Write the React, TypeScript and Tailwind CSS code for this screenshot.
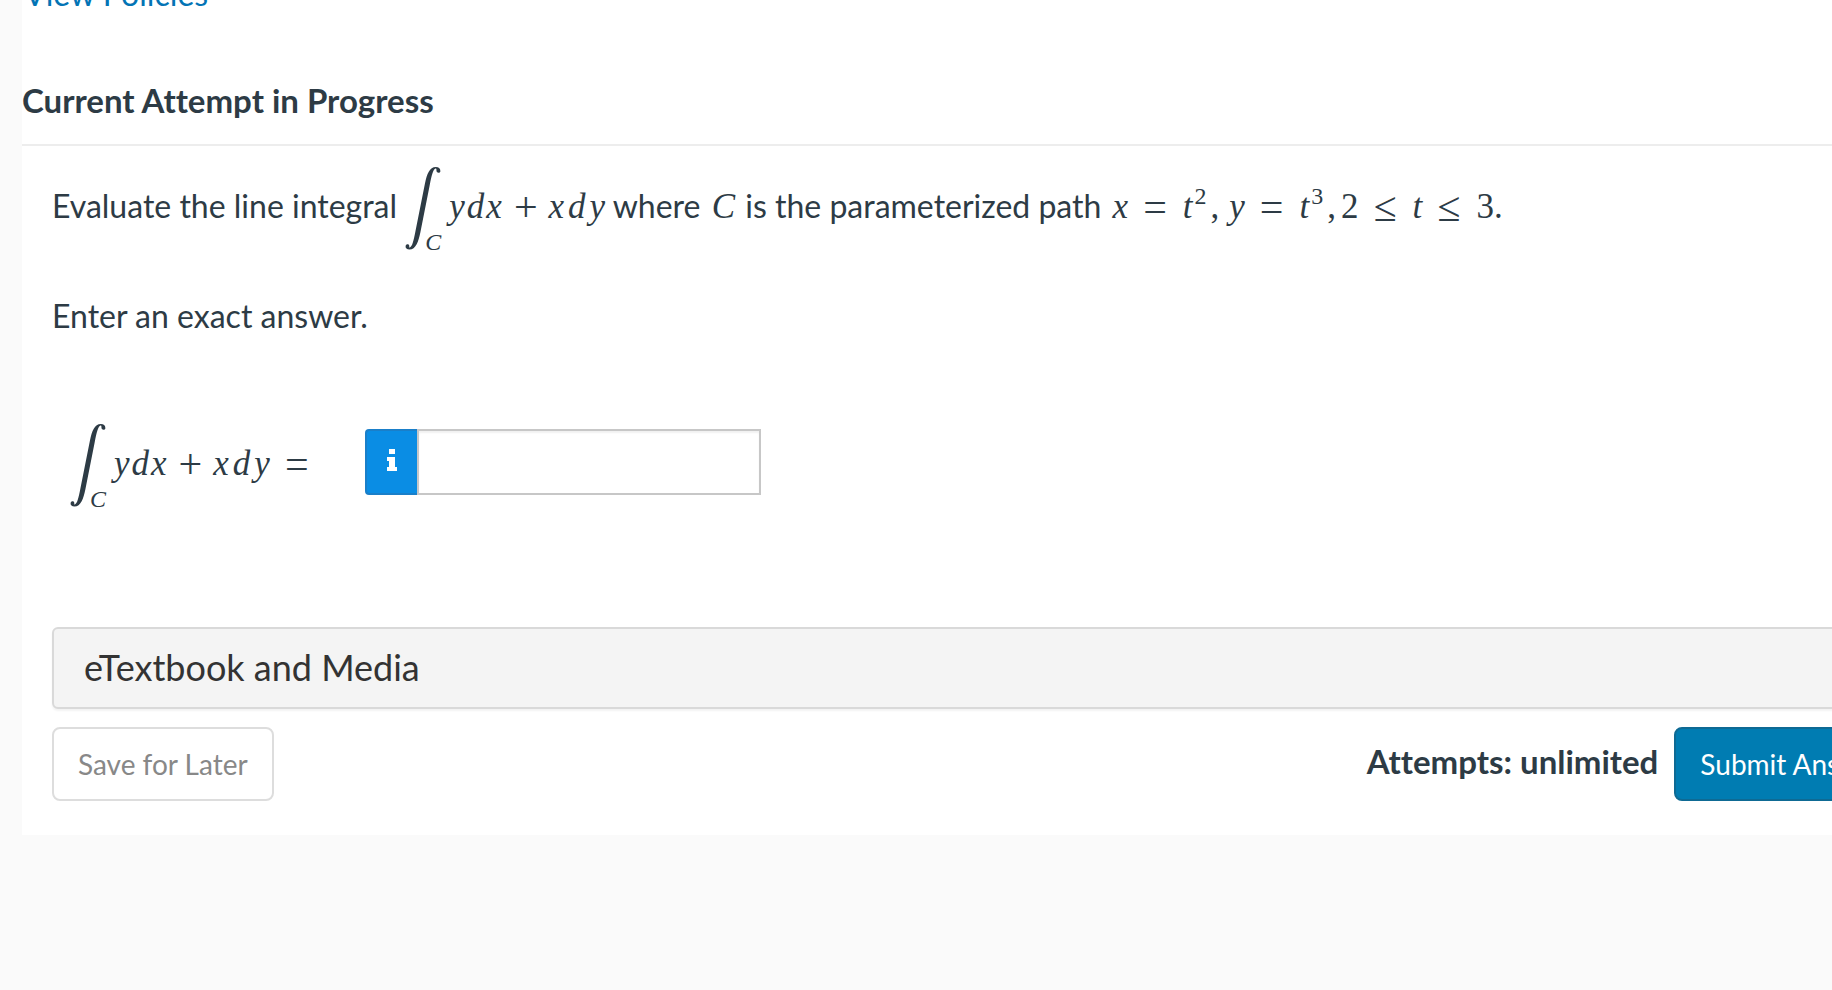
import { useState, type ReactNode } from 'react';

function Integral(): ReactNode {
  return (
    <>
      <svg
        aria-label="integral"
        viewBox="0 0 36 84"
        className="inline h-[84px] w-9 align-[-32px]"
        fill="currentColor"
      >
        <path d="M35.4 5.2C35.4 2.4 33.6 1 30.8 1C24.6 1 21.9 8.2 20 17.2L10.4 65.5C8.6 74.6 7.3 80.6 4.9 81.4C3.9 81.7 4.5 80.7 4.2 79.4C3.8 77.9 1 77.8 .6 79.9C.2 82 1.9 83.5 4.5 83.5C10.8 83.5 13.4 75.8 15.4 66.2L24.7 19.2C26.6 9.6 28.2 3.5 30.5 2.6C31.6 2.2 31.4 3.4 31.5 5C31.7 7.2 35 7.3 35.4 5.2Z" />
      </svg>
      <sub className="static -ml-4 mr-2 inline-block align-[-32px] text-2xl leading-none">C</sub>
    </>
  );
}

function MathText({ children }: { children: ReactNode }): ReactNode {
  return (
    <span className="inline-block whitespace-nowrap font-['Liberation_Serif',serif] text-[35px] italic leading-8">
      {children}
    </span>
  );
}

// relations (=, ≤) sit wider apart than the plus sign
function Relation({ children }: { children: ReactNode }): ReactNode {
  return (
    <span className="ml-[15px] mr-4 inline-block align-[-3px] text-[42px] not-italic leading-8">
      {children}
    </span>
  );
}

function Power({ children }: { children: ReactNode }): ReactNode {
  return (
    <sup className="static ml-[2px] inline-block align-[14px] text-2xl not-italic leading-none">
      {children}
    </sup>
  );
}

function Integrand(): ReactNode {
  return (
    <>
      <Integral />
      <span className="inline-flex gap-[2px]">
        <i>y</i>
        <i>d</i>
        <i>x</i>
      </span>
      <span className="ml-3 mr-[11px] inline-block align-[-3px] text-[42px] not-italic leading-8">+</span>
      <span className="inline-flex gap-1">
        <i>x</i>
        <i>d</i>
        <i>y</i>
      </span>
    </>
  );
}

export default function App(): ReactNode {
  const [answer, setAnswer] = useState('');

  return (
    <div className="min-h-screen overflow-hidden bg-[#fafafa] pl-[22px] font-['Lato',sans-serif] text-[32px] leading-8 text-[#2d3b45] [font-variant-ligatures:none]">
      <main className="-mr-[110px] bg-white pb-[34px]">
        <a href="#policies" className="-mt-[22px] ml-[2px] block w-fit text-[#0374b5]">
          View Policies
        </a>

        <h2 className="mt-[74px] border-b-2 border-[#ededed] pb-7 text-[33px] font-bold leading-8">
          Current Attempt in Progress
        </h2>

        <section className="px-[30px]">
          <p className="mt-5 whitespace-nowrap">
            Evaluate the line integral{' '}
            <MathText>
              <Integrand />
            </MathText>{' '}
            where{' '}
            <span className="ml-[3px] mr-[2px]">
              <MathText>C</MathText>
            </span>{' '}
            is the parameterized path{' '}
            <span className="ml-[3px]">
              <MathText>
                x<Relation>=</Relation>t<Power>2</Power>
                <span className="ml-1 mr-[10px] inline-block not-italic">,</span>
                y<Relation>=</Relation>t<Power>3</Power>
                <span className="ml-1 mr-[5px] inline-block not-italic">,</span>
                <span className="not-italic">2</span>
                <Relation>≤</Relation>t<Relation>≤</Relation>
                <span className="not-italic">3.</span>
              </MathText>
            </span>
          </p>

          <p className="mt-[46px]">Enter an exact answer.</p>

          <div className="mt-[91px] flex items-start pl-[18px]">
            <label htmlFor="answer">
              <MathText>
                <Integrand />
                <span className="ml-[15px] inline-block align-[-3px] text-[42px] not-italic leading-8">=</span>
              </MathText>
            </label>
            <div className="ml-14 mt-[6px] flex h-[66px]">
              <button
                type="button"
                aria-label="Answer information"
                className="flex w-[52px] items-center justify-center rounded-l border-2 border-r-0 border-[#1a7fc9] bg-[#0a8de4] pb-1 text-white"
              >
                <svg viewBox="0 0 10 22" className="h-[22px] w-[10px]" fill="currentColor">
                  <path d="M2 0h6v5H2zM0 8h8v10h2v4H0v-4h2v-6H0z" />
                </svg>
              </button>
              <input
                id="answer"
                type="text"
                value={answer}
                onChange={(event) => setAnswer(event.target.value)}
                autoComplete="off"
                className="w-[344px] border-2 border-[#c7c7c7] bg-white px-3 shadow-[inset_0_2px_2px_rgba(0,0,0,0.06)] outline-none"
              />
            </div>
          </div>

          <button
            type="button"
            className="mt-[116px] block h-[82px] w-full rounded-md border-2 border-[#d9d9d9] bg-[#f4f4f4] px-[30px] pb-[2px] text-left text-[36px] text-[#333333] shadow-[0_2px_2px_rgba(0,0,0,0.05)]"
          >
            eTextbook and Media
          </button>

          <div className="mt-[18px] flex items-center justify-between">
            <button
              type="button"
              className="h-[74px] rounded-lg border-2 border-[#dddddd] bg-white px-6 text-[28px] text-[#888888]"
            >
              Save for Later
            </button>
            <div className="flex items-center gap-4">
              <span className="pb-[6px] text-[33px] font-bold">Attempts: unlimited</span>
              <button
                type="button"
                className="h-[74px] rounded-lg border-2 border-[#0e6a94] bg-[#007cb2] px-6 text-[28px] text-white"
              >
                Submit Answer
              </button>
            </div>
          </div>
        </section>
      </main>
    </div>
  );
}
